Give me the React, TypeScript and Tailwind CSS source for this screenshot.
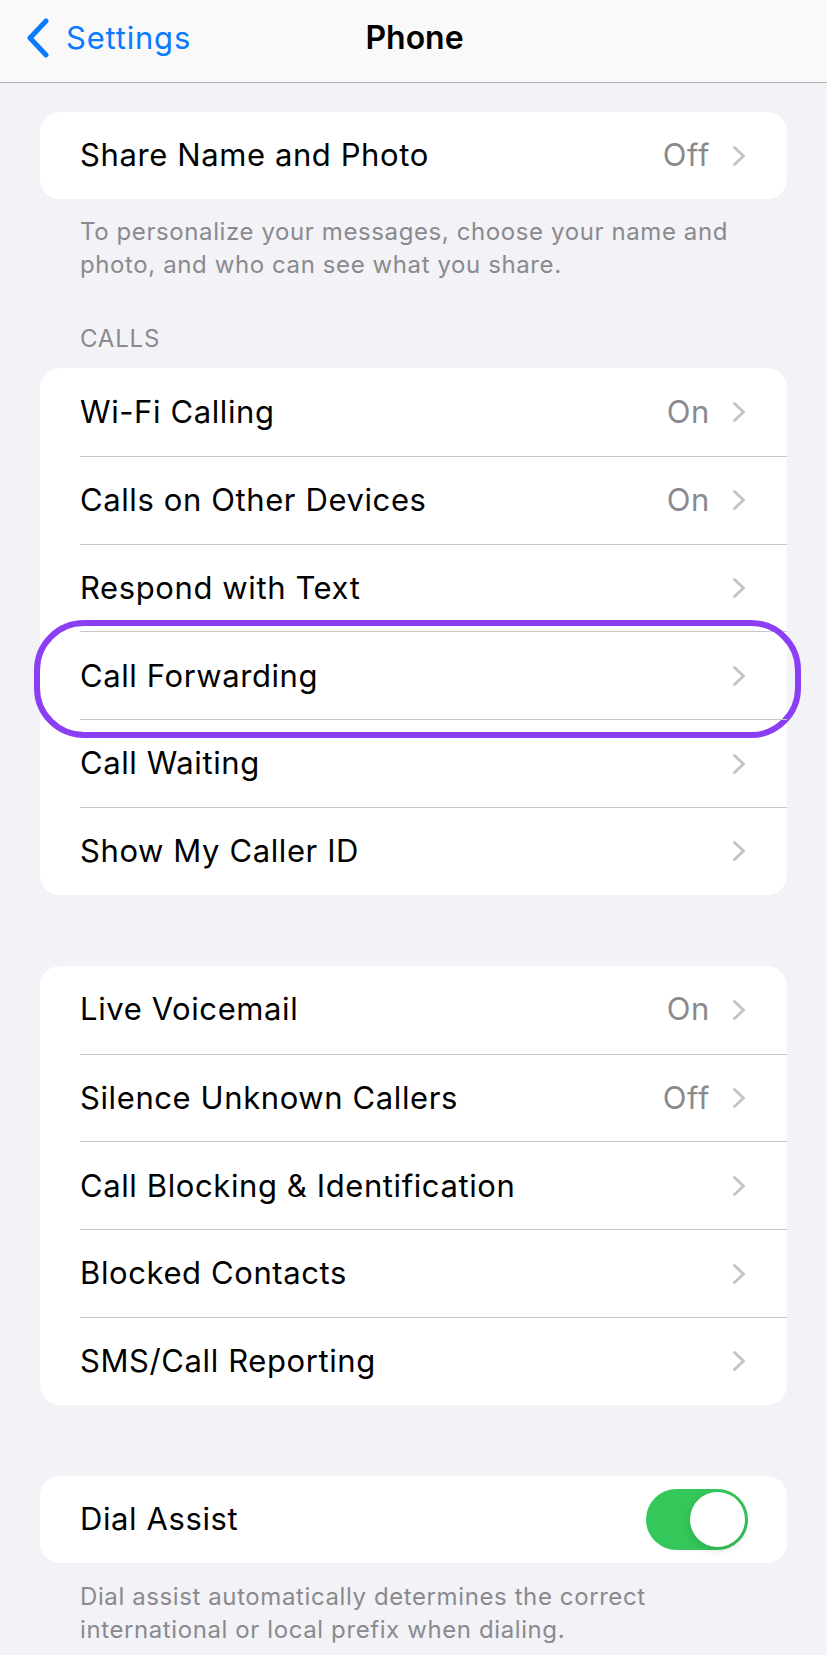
import React, { useState } from 'react';

interface Row {
  label: string;
  value?: string;
  highlight?: boolean;
}

const callRows: Row[] = [
  { label: 'Wi-Fi Calling', value: 'On' },
  { label: 'Calls on Other Devices', value: 'On' },
  { label: 'Respond with Text' },
  { label: 'Call Forwarding', highlight: true },
  { label: 'Call Waiting' },
  { label: 'Show My Caller ID' },
];

const voicemailRows: Row[] = [
  { label: 'Live Voicemail', value: 'On' },
  { label: 'Silence Unknown Callers', value: 'Off' },
  { label: 'Call Blocking & Identification' },
  { label: 'Blocked Contacts' },
  { label: 'SMS/Call Reporting' },
];

function Chevron() {
  return (
    <svg width="14" height="22" viewBox="0 0 14 22" fill="none" className="shrink-0">
      <path d="M2.5 2.5 L11.5 11 L2.5 19.5" stroke="#c4c4c7" strokeWidth="3" strokeLinecap="round" strokeLinejoin="round" />
    </svg>
  );
}

function SettingsRow({ row, first }: { row: Row; first: boolean }) {
  return (
    <div className="relative h-[87.8px] pl-[40px]">
      <div className={`flex h-full items-center pr-[41px] ${first ? '' : 'border-t border-[#c8c8cb]'}`}>
        <span className="flex-1 text-[31px] tracking-[0.6px] text-black">{row.label}</span>
        {row.value && <span className="mr-[22px] text-[31px] tracking-[0.6px] text-[#8a8a8e]">{row.value}</span>}
        <Chevron />
      </div>
      {row.highlight && (
        <div className="pointer-events-none absolute -left-[6px] -right-[14px] -top-[11px] -bottom-[19px] rounded-[50px] border-[6px] border-[#8b3ff5]" />
      )}
    </div>
  );
}

function Group({ rows }: { rows: Row[] }) {
  return (
    <div className="rounded-[20px] bg-white">
      {rows.map((row, i) => (
        <SettingsRow key={row.label} row={row} first={i === 0} />
      ))}
    </div>
  );
}

export default function App() {
  const [dialAssist, setDialAssist] = useState(true);

  return (
    <div className="min-h-screen w-full bg-[#f2f2f7] font-['Inter',sans-serif]">
      {/* nav bar */}
      <div className="relative flex h-[83px] items-center border-b border-[#b4b4b7] bg-[#f9f9f9] pb-[6px]">
        <button className="flex items-center pl-[25px] text-[31px] tracking-[0.8px] text-[#0a7aff]">
          <svg width="26" height="40" viewBox="0 0 26 40" fill="none" className="mr-[15px]">
            <path d="M21 3 L5 20 L21 37" stroke="#0a7aff" strokeWidth="5" strokeLinecap="round" strokeLinejoin="round" />
          </svg>
          Settings
        </button>
        <div className="absolute inset-x-0 top-0 flex h-full items-center justify-center pb-[6px] pl-[2px] text-[32px] font-semibold text-black pointer-events-none">
          Phone
        </div>
      </div>

      <div className="px-[40px] pb-[40px]">
        <div className="mt-[29px] flex h-[87px] items-center rounded-[20px] bg-white pl-[40px] pr-[41px]">
          <span className="flex-1 text-[31px] tracking-[0.6px] text-black">Share Name and Photo</span>
          <span className="mr-[22px] text-[31px] tracking-[0.6px] text-[#8a8a8e]">Off</span>
          <Chevron />
        </div>
        <p className="mt-[16px] px-[40px] text-[24px] leading-[33px] tracking-[0.6px] text-[#8a8a8e]">
          To personalize your messages, choose your name and
          <br />
          photo, and who can see what you share.
        </p>

        <div className="mt-[42px] px-[40px] text-[24px] leading-[32px] tracking-[0.8px] text-[#8a8a8e]">CALLS</div>
        <div className="mt-[13px]">
          <Group rows={callRows} />
        </div>

        <div className="mt-[71px]">
          <Group rows={voicemailRows} />
        </div>

        <div className="mt-[71px] flex h-[87px] items-center rounded-[20px] bg-white pl-[40px] pr-[39px]">
          <span className="flex-1 text-[31px] tracking-[0.6px] text-black">Dial Assist</span>
          <button
            onClick={() => setDialAssist(!dialAssist)}
            className={`flex h-[61px] w-[102px] items-center rounded-full p-[3px] ${dialAssist ? 'justify-end bg-[#34c759]' : 'justify-start bg-[#e9e9eb]'}`}
          >
            <span className="h-[55px] w-[55px] rounded-full bg-white shadow-[0_3px_8px_rgba(0,0,0,0.15)]" />
          </button>
        </div>
        <p className="mt-[17px] px-[40px] text-[24px] leading-[33px] tracking-[0.6px] text-[#8a8a8e]">
          Dial assist automatically determines the correct
          <br />
          international or local prefix when dialing.
        </p>
      </div>
    </div>
  );
}
